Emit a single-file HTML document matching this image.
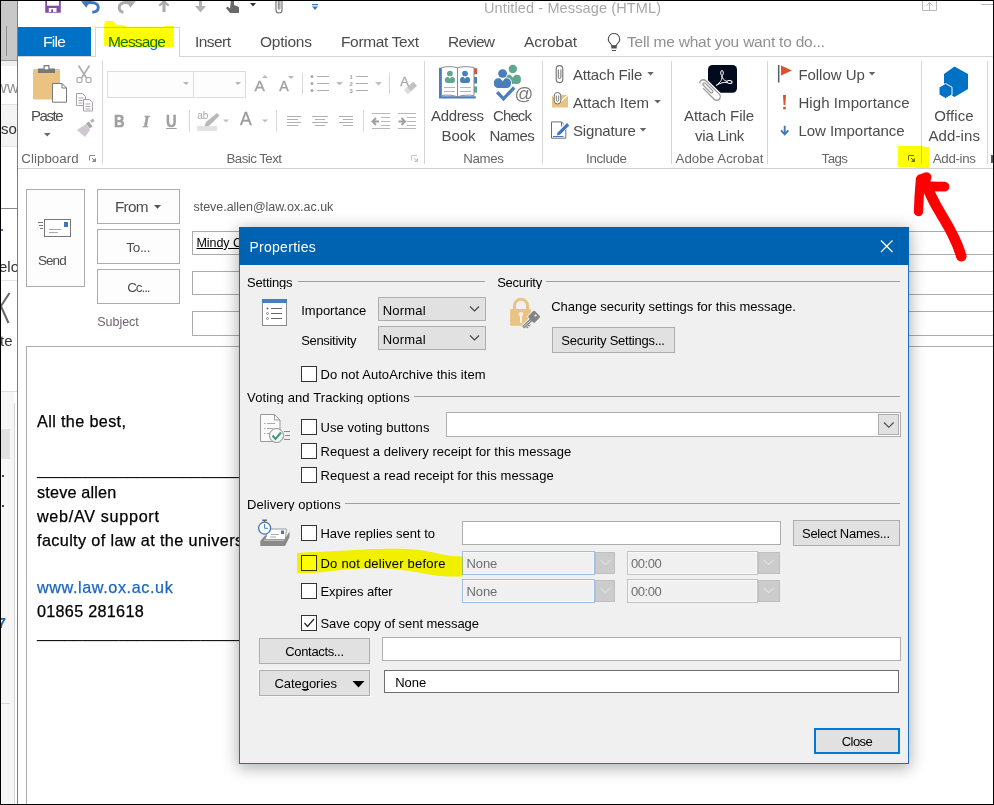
<!DOCTYPE html>
<html lang="en"><head><meta charset="utf-8"><title>Properties</title>
<style>
html,body{margin:0;padding:0;}
body{width:994px;height:805px;overflow:hidden;background:#fff;position:relative;font-family:"Liberation Sans", sans-serif;}
#root{position:absolute;left:0;top:0;width:994px;height:805px;overflow:hidden;background:#fff;}
#root div,#root svg{position:absolute;box-sizing:border-box;}
.t{position:absolute;white-space:pre;line-height:1;}
</style></head><body><div id="root">
<div style="left:0px;top:0px;width:17px;height:61px;background:#c8c8c8;"></div>
<div style="left:6px;top:26px;width:1px;height:30px;background:#8f8f8f;"></div>
<div style="left:0px;top:60px;width:17px;height:1px;background:#9a9a9a;"></div>
<div style="left:0px;top:61px;width:17px;height:5px;background:#f0f0f0;"></div>
<div style="left:0px;top:66px;width:17px;height:38px;background:#ffffff;"></div>
<div style="left:0px;top:104px;width:17px;height:1px;background:#e2e2e2;"></div>
<div style="left:0px;top:105px;width:17px;height:41px;background:#f4f4f4;"></div>
<div style="left:0px;top:146px;width:17px;height:1px;background:#e2e2e2;"></div>
<div style="left:0px;top:147px;width:17px;height:62px;background:#ffffff;"></div>
<div style="left:0px;top:208px;width:17px;height:1px;background:#8a8a8a;"></div>
<div style="left:0px;top:210px;width:17px;height:595px;background:#ffffff;"></div>
<div style="left:0px;top:391px;width:17px;height:1px;background:#dcdcdc;"></div>
<div style="left:0px;top:392px;width:14px;height:413px;background:#f6f6f6;"></div>
<div style="left:0px;top:429px;width:10px;height:30px;background:#e1e1e1;"></div>
<div style="left:14px;top:403px;width:1px;height:402px;background:#d6d6d6;"></div>
<div style="left:0px;top:703px;width:10px;height:1px;background:#d6d6d6;"></div>
<div style="left:2px;top:475px;width:2px;height:2px;background:#444;"></div>
<div style="left:2px;top:505px;width:2px;height:2px;background:#444;"></div>
<svg style="left:0;top:292px" width="17" height="38" viewBox="0 0 17 38"><path d="M9.500 1L0 15.500M0 12L8.500 31" stroke="#666" stroke-width="2" fill="none"/></svg>
<div style="left:1px;top:229px;width:2px;height:2px;background:#3b78c3;"></div>
<div style="left:0px;top:280px;width:17px;height:1px;background:#e4e4e4;"></div>
<span class="t" style="left:-5px;top:79px;font-size:16.5px;color:#8e8e8e;">ww</span>
<span class="t" style="left:1px;top:121px;font-size:15px;color:#333;">so</span>
<span class="t" style="left:-1px;top:259px;font-size:15px;color:#333;">elo</span>
<span class="t" style="left:0px;top:333px;font-size:15px;color:#333;">te</span>
<span class="t" style="left:-2.5px;top:615px;font-size:15.5px;color:#1e5fb4;font-weight:bold;">7</span>
<div style="left:18px;top:0px;width:976px;height:805px;background:#fff;"></div>
<div style="left:17px;top:0px;width:1px;height:805px;background:#7d7d7d;"></div>
<div style="left:18px;top:27px;width:73px;height:30px;background:#0072c6;"></div>
<div style="left:18px;top:56px;width:77px;height:1px;background:#d4d4d4;"></div>
<div style="left:179px;top:56px;width:815px;height:1px;background:#d4d4d4;"></div>
<div style="left:95px;top:27px;width:85px;height:30px;border:1px solid #d4d4d4;border-bottom:none;"></div>
<div style="left:18px;top:168px;width:976px;height:1px;background:#d2d2d2;"></div>
<div style="left:102px;top:61px;width:1px;height:103px;background:#d6d6d6;"></div>
<div style="left:424px;top:61px;width:1px;height:103px;background:#d6d6d6;"></div>
<div style="left:542px;top:61px;width:1px;height:103px;background:#d6d6d6;"></div>
<div style="left:671px;top:61px;width:1px;height:103px;background:#d6d6d6;"></div>
<div style="left:767px;top:61px;width:1px;height:103px;background:#d6d6d6;"></div>
<div style="left:921px;top:61px;width:1px;height:103px;background:#d6d6d6;"></div>
<div style="left:987px;top:61px;width:1px;height:103px;background:#d6d6d6;"></div>
<div style="left:991px;top:155px;width:2px;height:8px;background:#555;"></div>
<svg style="left:40px;top:0" width="290" height="16" viewBox="40 0 290 16">
<path d="M45.200 0h15.600v12.800h-15.600z" fill="#854fa8"/><path d="M47 0h12v5.700h-12z" fill="#fff"/><path d="M48.800 8h7.700v4h-7.700z" fill="#fff"/><path d="M51.200 9.300h1.900v3h-1.900z" fill="#854fa8"/>
<path d="M85.500 3.800C91 1.200 98.300 2.800 98.300 7.500C98.300 10.500 95.500 12 92.300 12.200" fill="none" stroke="#3f78bf" stroke-width="2.900"/><path d="M81 1.200L90 1L86.300 7.800Z" fill="#3f78bf"/>
<path d="M131 3.800C125.500 1.200 119.200 2.800 119.200 7.500C119.200 10 121 12 123.500 12.300" fill="none" stroke="#ababab" stroke-width="2.900"/><path d="M135.800 1.200L126.500 1L130.300 7.800Z" fill="#ababab"/>
<path d="M162.5 0h3v12h-3z M158.5 5 L164 0 L169.5 5 L168 6.5 L164 3 L160 6.5Z" fill="#ababab"/>
<path d="M199 0h3v8h-3z M195 6 L206 6 L200.5 12.5Z" fill="#b4b4b4"/>
<path d="M231 0h3v5l5 2v6h-9l-4-5 1.5-1.5 2.5 2z" fill="#6a6a6a"/>
<path d="M250 3h6l-3 3.5z" fill="#333"/>
<path d="M276 0v10a3 3 0 0 0 6 0V0" fill="none" stroke="#777" stroke-width="1.2"/><path d="M278.3 0v8.5a.8.8 0 0 0 1.6 0V0" fill="none" stroke="#777" stroke-width="1"/>
<path d="M312 4h6v1.2h-6z M312 6.5h6l-3 3.5z" fill="#3b78c3"/>
</svg>
<svg style="left:920px;top:0" width="74" height="14" viewBox="920 0 74 14"><path d="M922.5 0V10.5H936.5V0" fill="none" stroke="#b8b8b8" stroke-width="1"/><path d="M929.5 2.5V10 M926.5 5.5 L929.5 2.5 L932.5 5.5" fill="none" stroke="#b8b8b8" stroke-width="1"/><path d="M981 4.5H993" stroke="#b8b8b8" stroke-width="1"/></svg>
<svg style="left:604px;top:31px" width="20" height="24" viewBox="0 0 20 24"><path d="M10 2.500a5.600 5.600 0 0 1 3.600 9.900c-.9.800-1.100 1.600-1.200 2.400h-4.800c-.1-.8-.3-1.600-1.200-2.400A5.600 5.600 0 0 1 10 2.500z" fill="none" stroke="#505050" stroke-width="1.100"/><rect x="7.300" y="14.600" width="5.400" height="2.900" fill="#505050"/><path d="M8 19.500h4" stroke="#505050" stroke-width="1"/></svg>
<svg style="left:30px;top:62px" width="70" height="80" viewBox="30 62 70 80">
<rect x="33" y="69" width="27" height="30.5" rx="1.5" fill="#eac282"/>
<path d="M38 73v-4.5h5.5v-3.5h6v3.5H55V73z" fill="#787878"/><rect x="44.7" y="66.3" width="3.6" height="3" fill="#fff"/>
<path d="M52.5 83.5h9.5l4.5 4.5v14.2h-14z" fill="#fff" stroke="#787878" stroke-width="1"/><path d="M62 83.5v4.5h4.5" fill="none" stroke="#787878" stroke-width="1"/>
<path d="M44 133h6.5l-3.25 3.5z" fill="#666"/>
<!-- scissors -->
<path d="M78.5 65.5L86.5 78 M89.5 65.5L81.5 78" stroke="#b0b0b0" stroke-width="1.8" fill="none"/><circle cx="79.5" cy="80" r="2.6" fill="none" stroke="#b0b0b0" stroke-width="1.2"/><circle cx="88.500" cy="80" r="2.6" fill="none" stroke="#b0b0b0" stroke-width="1.2"/>
<!-- copy -->
<path d="M76.5 93.5h6l3 3v9h-9z" fill="#fff" stroke="#a89ea8" stroke-width="1"/><path d="M83.500 99.500h6l3 3v8.500h-9z" fill="#fff" stroke="#a89ea8" stroke-width="1"/>
<path d="M78.500 98h5M78.500 100.500h4M78.500 103h4 M85.500 104h5M85.500 106.500h5M85.500 109h5" stroke="#ada3ad" stroke-width="1"/>
<!-- painter -->
<path d="M77 130l9-6 4 6-5 7z" fill="#d0c8d0"/><path d="M86 123.500l3-2 3.500 5-3 2z" fill="#a8a8a8"/><path d="M90 120.500l3-2 1.800 2.500-3 2z" fill="#b8b8b8"/>
</svg>
<svg style="left:89px;top:155px" width="8" height="8" viewBox="0 0 8 8"><path d="M.5 5.500V.5H6" fill="none" stroke="#8a8a8a" stroke-width="1"/><path d="M7 2.800V7H2.800Z" fill="#8a8a8a"/><path d="M3 3l3 3" stroke="#8a8a8a" stroke-width="1"/></svg>
<div style="left:107px;top:71px;width:87px;height:27px;background:#fdfdfd;border:1px solid #dcdcdc;"></div>
<div style="left:193px;top:71px;width:53px;height:27px;background:#fdfdfd;border:1px solid #dcdcdc;"></div>
<svg style="left:100px;top:60px" width="330" height="80" viewBox="100 60 330 80"><path d="M183 82h6l-3 3z M235 82h6l-3 3z" fill="#b8b8b8"/><path d="M262 78l3-3 3 3z M288 76h6l-3 3z" fill="#b8b8b8"/><path d="M302.500 73v21 M389.500 73v21 M189.500 110v22 M276.500 110v22 M363.500 110v22" stroke="#d8d8d8" stroke-width="1"/><circle cx="312" cy="76.500" r="1.500" fill="#aaa"/><circle cx="312" cy="83.500" r="1.500" fill="#aaa"/><circle cx="312" cy="90.500" r="1.500" fill="#aaa"/><path d="M317 76.500h12M317 83.500h12M317 90.500h12 M356 76.500h12M356 83.500h12M356 90.500h12" stroke="#b0b0b0" stroke-width="1"/><path d="M336 82h7l-3.500 3.500z M375 82h7l-3.500 3.500z" fill="#c0c0c0"/><g transform="translate(410.600 87.800) rotate(-42)"><rect x="-6.200" y="-2.800" width="12.400" height="5.600" rx="1" fill="#c2c2c2"/><rect x="-6.200" y="-2.800" width="4" height="5.600" rx="1" fill="#dedede"/></g><path d="M204 127l2-5 11-9 2.500 2.500-10 10z" fill="#b8b8b8"/><rect x="197" y="126" width="20" height="5" fill="#e6dfe6"/><path d="M223 119.500h6l-3 3z M262 119.500h6l-3 3z" fill="#c0c0c0"/><path d="M287 116.500h14M287 119.500h11M287 122.500h14M287 125.500h11 M312 116.500h16M315 119.500h10M312 122.500h16M315 125.500h10 M339 116.500h14M343 119.500h10M339 122.500h14M343 125.500h10" stroke="#b0b0b0" stroke-width="1"/><path d="M372 113.500h18M381 117.500h9M381 121.500h9M381 125.500h9M372 128.500h18 M398 113.500h18M407 117.500h9M407 121.500h9M407 125.500h9M398 128.500h18" stroke="#b8b8b8" stroke-width="1"/><path d="M379 121.500h-6.500M376 118l-3.500 3.500 3.500 3.500 M398.500 121.500h6.500M401.500 118l3.500 3.500-3.500 3.500" stroke="#a0a0a0" stroke-width="2" fill="none"/></svg>
<svg style="left:411px;top:155px" width="8" height="8" viewBox="0 0 8 8"><path d="M.5 5.500V.5H6" fill="none" stroke="#c8c8c8" stroke-width="1"/><path d="M7 2.800V7H2.800Z" fill="#c8c8c8"/><path d="M3 3l3 3" stroke="#c8c8c8" stroke-width="1"/></svg>
<svg style="left:436px;top:62px" width="102" height="44" viewBox="436 62 102 44">
<rect x="474" y="68.200" width="3" height="6" fill="#d9532c"/><rect x="474" y="77" width="3" height="6.500" fill="#4a7ebb"/><rect x="474" y="86.400" width="3" height="6.300" fill="#5fa88f"/>
<path d="M439 67.800h2.500v28.400H475.700v2.300H439z" fill="#4a7ebb"/>
<path d="M441.500 67.500 C447 66.300 453 66.300 457.500 67.800 C462 66.300 468 66.300 474 67.500 V95.500 C468 94.800 462 95 457.500 96.800 C453 95 447 94.800 441.500 95.500Z" fill="#fff" stroke="#8a8a8a" stroke-width="1"/>
<path d="M457.500 67.800v29" stroke="#8a8a8a" stroke-width="1"/>
<circle cx="449.900" cy="73.600" r="2.900" fill="#5fa88f"/><rect x="445" y="77" width="9.900" height="5.900" rx="2.500" fill="#5fa88f"/><path d="M448 76.500l1.900 2.300 1.900-2.300z" fill="#fff"/>
<circle cx="465" cy="73.600" r="2.900" fill="#4a7ebb"/><rect x="460.100" y="77" width="9.900" height="5.900" rx="2.500" fill="#4a7ebb"/><path d="M463.100 76.500l1.900 2.300 1.900-2.300z" fill="#fff"/>
<path d="M444 87.500h11M444 91.500h11 M460 87.500h11M460 91.500h11" stroke="#b4b4b4" stroke-width="1"/>
<!-- check names -->
<circle cx="512.800" cy="69" r="4.200" fill="#5fa88f"/><rect x="505" y="74.800" width="15.900" height="9.200" rx="4" fill="#5fa88f"/><path d="M510 74.300l2.800 3.200 2.800-3.200z" fill="#fff"/>
<circle cx="502.600" cy="73.600" r="5.200" fill="#fff"/><rect x="493.100" y="77.500" width="18.700" height="11.300" rx="5" fill="#fff"/>
<circle cx="502.600" cy="73.600" r="4.400" fill="#4a7ebb"/><rect x="493.900" y="78.300" width="17.100" height="9.700" rx="4.300" fill="#4a7ebb"/><path d="M499.600 77.800l3 3.500 3-3.500z" fill="#fff"/>
<path d="M495.500 90l8 8.500 12.500-13" fill="none" stroke="#fff" stroke-width="5.500"/>
<path d="M497.200 92.200l6.300 6.600 10.700-11.300" fill="none" stroke="#4a7ebb" stroke-width="3.300"/>
</svg>
<svg style="left:548px;top:62px" width="120" height="80" viewBox="548 62 120 80">
<rect x="556.200" y="65.600" width="6.600" height="17" rx="3.300" fill="none" stroke="#6e6e6e" stroke-width="1.100"/>
<path d="M558.300 69.500V77.200a1.300 1.300 0 0 0 2.600 0V69.500" fill="none" stroke="#6e6e6e" stroke-width="1"/>
<path d="M552 94.800h16v12.700h-16z" fill="#eac282"/><path d="M552 95l8 7 8-7" fill="none" stroke="#fff" stroke-width="1.100"/>
<rect x="554.200" y="92.500" width="6.600" height="11.500" rx="3.300" fill="#fff" stroke="#6e6e6e" stroke-width="1"/>
<path d="M556.300 95.500V100a1.200 1.200 0 0 0 2.400 0V95.500" fill="none" stroke="#6e6e6e" stroke-width=".9"/>
<path d="M551.500 121.900h10l4.300 4.300v12h-14.300z" fill="#fff" stroke="#6e6e6e" stroke-width="1"/><path d="M561.500 121.900v4.300h4.300" fill="none" stroke="#6e6e6e" stroke-width="1"/>
<path d="M558.300 133.500l9.200-9.200" stroke="#fff" stroke-width="5"/>
<path d="M556.700 135.600l1-3.200 9.300-9.300 2.300 2.300-9.300 9.300z" fill="#3f78bf"/>
<path d="M553 136.500h10.500" stroke="#3f78bf" stroke-width="1"/>
<path d="M647.300 72h6.500l-3.250 3.500z M654.300 100h6.500l-3.250 3.500z M639.800 128h6.500l-3.250 3.500z" fill="#666"/>
</svg>
<svg style="left:696px;top:62px" width="46" height="44" viewBox="696 62 46 44">
<rect x="708" y="65" width="29" height="27.700" rx="4.500" fill="#020a1e"/>
<g fill="none" stroke="#fff" stroke-width="1">
<ellipse cx="722" cy="73" rx="1.300" ry="2.500"/>
<path d="M722 75.500C722.500 79 721 82 716 85.500"/>
<path d="M721.700 76C722.500 78.500 724 80.500 727 81.500"/>
<path d="M716.500 85.300C720 82.800 724 82.200 727 82.500"/>
<ellipse cx="729.500" cy="82" rx="2.600" ry="1.400" transform="rotate(8 729.500 82)"/>
</g>
<g transform="translate(710 90) rotate(-45)">
<rect x="-3.600" y="-13" width="7.200" height="26" rx="3.600" fill="#fff" stroke="#fff" stroke-width="3.600"/>
<rect x="-3.600" y="-13" width="7.200" height="26" rx="3.600" fill="#fff" stroke="#9a9a9a" stroke-width="1.300"/>
<path d="M-3.600 -6V-14" stroke="#fff" stroke-width="2"/>
<rect x="-1.400" y="-9.500" width="2.800" height="13" rx="1.400" fill="none" stroke="#9a9a9a" stroke-width="1.200"/>
</g>
</svg>
<svg style="left:776px;top:62px" width="20" height="80" viewBox="776 62 20 80">
<path d="M778.700 65v17.500" stroke="#5a5a5a" stroke-width="1.500"/><path d="M781 65.500l11 5-11 5z" fill="#d9532c"/>
<path d="M783 95h3l-.6 10h-1.800z" fill="#d9532c"/><rect x="783.200" y="106.800" width="2.600" height="2.600" fill="#d9532c"/>
<path d="M784.700 125.800v8 M781 130.300l3.700 4 3.700-4" fill="none" stroke="#3f78bf" stroke-width="1.900"/>
<path d="M868.800 72h6.500l-3.250 3.500z" fill="#666"/>
</svg>
<svg style="left:866px;top:70px" width="12" height="8" viewBox="866 70 12 8"><path d="M868.800 72h6.500l-3.250 3.500z" fill="#666"/></svg>
<svg style="left:908px;top:155px" width="8" height="8" viewBox="0 0 8 8"><path d="M.5 5.500V.5H6" fill="none" stroke="#6e6e6e" stroke-width="1"/><path d="M7 2.800V7H2.800Z" fill="#6e6e6e"/><path d="M3 3l3 3" stroke="#6e6e6e" stroke-width="1"/></svg>
<svg style="left:935px;top:64px" width="36" height="36" viewBox="935 64 36 36">
<path d="M954.500 66.500l13.500 7.500v15l-13.500 8-4-2.500v-6l-6.500-4v-10.500z" fill="#0072c6"/>
<path d="M945.500 83.500l6.500 3.700v7.600l-6.500 3.700-6.500-3.700v-7.600z" fill="#0072c6" stroke="#fff" stroke-width="1"/>
</svg>
<div style="left:26px;top:189px;width:59px;height:98px;background:#fdfdfd;border:1px solid #ababab;"></div>
<div style="left:97px;top:189px;width:83px;height:35px;background:#fdfdfd;border:1px solid #ababab;"></div>
<div style="left:97px;top:229px;width:83px;height:35px;background:#fdfdfd;border:1px solid #ababab;"></div>
<div style="left:97px;top:269px;width:83px;height:35px;background:#fdfdfd;border:1px solid #ababab;"></div>
<div style="left:192px;top:231px;width:810px;height:24px;background:#fff;border:1px solid #ababab;"></div>
<div style="left:192px;top:271px;width:810px;height:24px;background:#fff;border:1px solid #ababab;"></div>
<div style="left:192px;top:311px;width:810px;height:25px;background:#fff;border:1px solid #ababab;"></div>
<svg style="left:36px;top:216px" width="38" height="24" viewBox="36 216 38 24">
<rect x="44.500" y="219.500" width="26" height="17" fill="#fff" stroke="#777" stroke-width="1"/>
<rect x="64" y="222" width="4" height="5" fill="#3b78c3"/>
<path d="M49 229.500h12M49 232.500h9" stroke="#aaa" stroke-width="1"/>
<path d="M38 222.500h5M39 225.500h4M40 228.500h3" stroke="#777" stroke-width="1"/>
</svg>
<svg style="left:152px;top:203px" width="12" height="8" viewBox="0 0 12 8"><path d="M2 2h7l-3.500 3.800z" fill="#555"/></svg>
<div style="left:26px;top:346px;width:980px;height:470px;background:#fff;border:1px solid #ababab;"></div>
<span class="t" style="left:484px;top:1px;font-size:14.5px;color:#a8a8a8;letter-spacing:0.123px;">Untitled - Message (HTML)</span>
<span class="t" style="left:43px;top:34px;font-size:15.5px;color:#fff;letter-spacing:-0.661px;">File</span>
<span class="t" style="left:108px;top:34px;font-size:15.5px;color:#1a70d0;letter-spacing:-0.818px;">Message</span>
<span class="t" style="left:195px;top:34px;font-size:15.5px;color:#4c4c4c;letter-spacing:-0.553px;">Insert</span>
<span class="t" style="left:260px;top:34px;font-size:15.5px;color:#4c4c4c;letter-spacing:-0.237px;">Options</span>
<span class="t" style="left:341px;top:34px;font-size:15.5px;color:#4c4c4c;letter-spacing:-0.355px;">Format Text</span>
<span class="t" style="left:448px;top:34px;font-size:15.5px;color:#4c4c4c;letter-spacing:-0.766px;">Review</span>
<span class="t" style="left:524px;top:34px;font-size:15.5px;color:#4c4c4c;letter-spacing:-0.070px;">Acrobat</span>
<span class="t" style="left:627px;top:34px;font-size:15.5px;color:#909090;letter-spacing:-0.213px;">Tell me what you want to do...</span>
<span class="t" style="left:31px;top:108px;font-size:15px;color:#4c4c4c;letter-spacing:-1.465px;">Paste</span>
<span class="t" style="left:21.3px;top:152px;font-size:13.3px;color:#666;letter-spacing:0.047px;">Clipboard</span>
<span class="t" style="left:114.4px;top:113px;font-size:17px;color:#a0a0a0;font-weight:bold;transform:scaleX(.86);transform-origin:left;-webkit-text-stroke:.6px;">B</span>
<span class="t" style="left:142.8px;top:113px;font-size:17.6px;color:#a0a0a0;font-weight:bold;font-style:italic;font-family:'Liberation Serif', serif;-webkit-text-stroke:.3px;">I</span>
<span class="t" style="left:165.8px;top:114px;font-size:16px;color:#a0a0a0;font-weight:bold;text-decoration:underline;transform:scaleX(.92);transform-origin:left;-webkit-text-stroke:.4px;">U</span>
<span class="t" style="left:197.3px;top:111px;font-size:10px;color:#a8a8a8;">ab</span>
<span class="t" style="left:240px;top:111px;font-size:17.5px;color:#9c9c9c;-webkit-text-stroke:.35px;">A</span>
<span class="t" style="left:254.5px;top:78px;font-size:15.5px;color:#a0a0a0;-webkit-text-stroke:.35px;">A</span>
<span class="t" style="left:279.3px;top:79px;font-size:14.2px;color:#a0a0a0;-webkit-text-stroke:.35px;">A</span>
<span class="t" style="left:349.6px;top:74px;font-size:6px;color:#a0a0a0;font-weight:bold;">1</span>
<span class="t" style="left:349.6px;top:81px;font-size:6px;color:#a0a0a0;font-weight:bold;">2</span>
<span class="t" style="left:349.6px;top:88px;font-size:6px;color:#a0a0a0;font-weight:bold;">3</span>
<span class="t" style="left:400.3px;top:75px;font-size:13px;color:#a8a8a8;-webkit-text-stroke:.3px;">A</span>
<span class="t" style="left:226.5px;top:152px;font-size:13.3px;color:#666;letter-spacing:-0.540px;">Basic Text</span>
<span class="t" style="left:514.5px;top:85px;font-size:18.5px;color:#7a7a7a;">@</span>
<span class="t" style="left:431px;top:108px;font-size:15px;color:#4c4c4c;letter-spacing:-0.339px;">Address</span>
<span class="t" style="left:441.5px;top:128px;font-size:15px;color:#4c4c4c;letter-spacing:-0.068px;">Book</span>
<span class="t" style="left:493px;top:108px;font-size:15px;color:#4c4c4c;letter-spacing:-0.883px;">Check</span>
<span class="t" style="left:489.5px;top:128px;font-size:15px;color:#4c4c4c;letter-spacing:-0.554px;">Names</span>
<span class="t" style="left:463.3px;top:152px;font-size:13.3px;color:#666;letter-spacing:-0.356px;">Names</span>
<span class="t" style="left:573px;top:67px;font-size:15px;color:#4c4c4c;letter-spacing:-0.158px;">Attach File</span>
<span class="t" style="left:573px;top:95px;font-size:15px;color:#4c4c4c;letter-spacing:0.013px;">Attach Item</span>
<span class="t" style="left:573px;top:123px;font-size:15px;color:#4c4c4c;letter-spacing:-0.177px;">Signature</span>
<span class="t" style="left:586px;top:152px;font-size:13.3px;color:#666;letter-spacing:-0.315px;">Include</span>
<span class="t" style="left:684px;top:108px;font-size:15px;color:#4c4c4c;letter-spacing:-0.087px;">Attach File</span>
<span class="t" style="left:695px;top:128px;font-size:15px;color:#4c4c4c;letter-spacing:-0.223px;">via Link</span>
<span class="t" style="left:675.5px;top:152px;font-size:13.3px;color:#666;letter-spacing:0.054px;">Adobe Acrobat</span>
<span class="t" style="left:798.4px;top:67px;font-size:15px;color:#4c4c4c;letter-spacing:-0.036px;">Follow Up</span>
<span class="t" style="left:798.4px;top:95px;font-size:15px;color:#4c4c4c;letter-spacing:0.088px;">High Importance</span>
<span class="t" style="left:798.4px;top:123px;font-size:15px;color:#4c4c4c;letter-spacing:-0.033px;">Low Importance</span>
<span class="t" style="left:821.6px;top:152px;font-size:13.3px;color:#666;letter-spacing:-0.565px;">Tags</span>
<span class="t" style="left:934.2px;top:108px;font-size:15px;color:#4c4c4c;letter-spacing:0.119px;">Office</span>
<span class="t" style="left:928.4px;top:128px;font-size:15px;color:#4c4c4c;letter-spacing:0.123px;">Add-ins</span>
<span class="t" style="left:932.8px;top:152px;font-size:13.3px;color:#666;letter-spacing:-0.316px;">Add-ins</span>
<span class="t" style="left:37.9px;top:254px;font-size:13.5px;color:#4c4c4c;letter-spacing:-0.910px;">Send</span>
<span class="t" style="left:115px;top:199px;font-size:15.3px;color:#4c4c4c;letter-spacing:-0.734px;">From</span>
<span class="t" style="left:126.2px;top:241px;font-size:13.5px;color:#4c4c4c;letter-spacing:-0.279px;">To...</span>
<span class="t" style="left:127.2px;top:281px;font-size:13.5px;color:#4c4c4c;letter-spacing:-1.091px;">Cc...</span>
<span class="t" style="left:97.2px;top:316px;font-size:12.5px;color:#6f636f;letter-spacing:-0.017px;">Subject</span>
<span class="t" style="left:193.5px;top:201px;font-size:12.5px;color:#555;letter-spacing:-0.032px;">steve.allen@law.ox.ac.uk</span>
<span class="t" style="left:196.5px;top:237px;font-size:12.5px;color:#000;letter-spacing:-0.057px;text-decoration:underline;">Mindy C</span>
<span class="t" style="left:37px;top:413px;font-size:16.2px;color:#000;letter-spacing:0.367px;-webkit-text-stroke:0.25px;">All the best,</span>
<span class="t" style="left:37px;top:461px;font-size:16.2px;color:#000;letter-spacing:0.074px;">________________________________________</span>
<span class="t" style="left:37px;top:484px;font-size:16.2px;color:#000;letter-spacing:0.191px;-webkit-text-stroke:0.25px;">steve allen</span>
<span class="t" style="left:37px;top:508px;font-size:16.2px;color:#000;letter-spacing:0.679px;-webkit-text-stroke:0.25px;">web/AV support</span>
<span class="t" style="left:37px;top:532px;font-size:16.2px;color:#000;letter-spacing:0.384px;-webkit-text-stroke:0.25px;">faculty of law at the univers</span>
<span class="t" style="left:37px;top:579px;font-size:16.2px;color:#1c66c0;letter-spacing:0.596px;-webkit-text-stroke:0.25px;">www.law.ox.ac.uk</span>
<span class="t" style="left:37px;top:603px;font-size:16.2px;color:#000;letter-spacing:0.288px;-webkit-text-stroke:0.25px;">01865 281618</span>
<span class="t" style="left:37px;top:624px;font-size:16.2px;color:#000;letter-spacing:0.074px;">________________________________________</span>
<svg style="left:100px;top:16px;mix-blend-mode:multiply" width="80" height="36" viewBox="100 16 80 36"><path d="M105.200 21 L113 21 L116.200 24.400 L124.200 25.400 L127.200 26.800 L164 26.800 L165 26 L174 26 L174 46.500 L171.500 47.600 L119.200 47.600 L118 46 L104.100 46 L104.100 25 Z" fill="#ffff00"/></svg>
<div style="left:898px;top:146px;width:25px;height:21px;background:#ffff00;mix-blend-mode:multiply;"></div>
<div style="left:915px;top:147px;width:14px;height:21px;background:#ffff00;mix-blend-mode:multiply;"></div>
<div style="left:239px;top:227px;width:670px;height:537px;background:#f0f0f0;border:1px solid #1a6fc0;box-shadow:0 3px 15px 1px rgba(0,0,0,.32);"></div>
<div style="left:239px;top:227px;width:670px;height:38px;background:#0063b1;"></div>
<svg style="left:879px;top:239px" width="16" height="16" viewBox="0 0 16 16"><path d="M2 1.500l11.500 11.500M13.500 1.500L2 13" stroke="#fff" stroke-width="1.200"/></svg>
<div style="left:298px;top:281px;width:187px;height:1px;background:#a0a0a0;"></div>
<div style="left:546px;top:281px;width:354px;height:1px;background:#a0a0a0;"></div>
<div style="left:414px;top:396px;width:486px;height:1px;background:#a0a0a0;"></div>
<div style="left:345px;top:503px;width:555px;height:1px;background:#a0a0a0;"></div>
<svg style="left:260px;top:297px" width="30" height="32" viewBox="260 297 30 32">
<rect x="262.500" y="299.500" width="24" height="26" fill="#fff" stroke="#8a8a8a" stroke-width="1"/><rect x="262" y="299" width="25" height="4" fill="#4a7ebb"/>
<circle cx="267.500" cy="308.500" r="1" fill="#666"/><circle cx="267.500" cy="313.500" r="1" fill="none" stroke="#666" stroke-width=".7"/><circle cx="267.500" cy="318.500" r="1" fill="none" stroke="#666" stroke-width=".7"/>
<path d="M271 308.500h11M271 313.500h11M271 318.500h11" stroke="#666" stroke-width="1"/></svg>
<div style="left:378px;top:297px;width:108px;height:24px;background:#e1e1e1;border:1px solid #adadad;"></div>
<svg style="left:469px;top:305.0px" width="12" height="8" viewBox="0 0 12 8"><path d="M1 1.500l4.500 4.500 4.500-4.500" fill="none" stroke="#444" stroke-width="1.100"/></svg>
<div style="left:378px;top:326px;width:108px;height:24px;background:#e1e1e1;border:1px solid #adadad;"></div>
<svg style="left:469px;top:334.0px" width="12" height="8" viewBox="0 0 12 8"><path d="M1 1.500l4.500 4.500 4.500-4.500" fill="none" stroke="#444" stroke-width="1.100"/></svg>
<div style="left:301px;top:366px;width:16px;height:16px;background:#fff;border:1px solid #333;"></div>
<svg style="left:506px;top:295px" width="38" height="38" viewBox="506 295 38 38">
<path d="M514.500 310v-4.200a6.500 6.500 0 0 1 13 0v4.200" fill="none" stroke="#eac282" stroke-width="3"/>
<rect x="510.100" y="309" width="20.900" height="16.800" rx="1.300" fill="#eac282"/>
<circle cx="521" cy="314.300" r="2.300" fill="#f0f0f0"/><rect x="520" y="315" width="2" height="8" fill="#f0f0f0"/>
<g stroke="#f0f0f0" stroke-width="2" fill="#f0f0f0"><rect x="-4.600" y="-4.600" width="9.200" height="9.200" rx="1.500" transform="translate(534.100 316.800) rotate(45)"/><path d="M531.500 319.500l-8.300 7.800" stroke-width="5.200"/></g>
<rect x="-4.600" y="-4.600" width="9.200" height="9.200" rx="1.500" transform="translate(534.100 316.800) rotate(45)" fill="#848484"/>
<path d="M531.500 319.500l-8.300 7.800" stroke="#848484" stroke-width="3.200"/><path d="M530.500 320.400l-6.800 6.400" stroke="#f0f0f0" stroke-width=".8"/>
<path d="M526.500 326.500l1.500 1.500M528.300 325l1.300 1.300" stroke="#848484" stroke-width="1.400"/>
<circle cx="535.600" cy="315.500" r="1.100" fill="#fff"/>
</svg>
<div style="left:552px;top:327px;width:123px;height:26px;background:#e1e1e1;border:1px solid #adadad;"></div>
<svg style="left:258px;top:412px" width="36" height="34" viewBox="258 412 36 34">
<path d="M260.500 414.500h14l5.500 5.500v21.500h-19.500z" fill="#fafafa" stroke="#9a9a9a" stroke-width="1"/><path d="M274.500 414.500v5.500h5.500" fill="none" stroke="#9a9a9a" stroke-width="1"/>
<path d="M264 423.500h1.500M267 423.500h8 M264 428.500h1.500M267 428.500h6 M264 433.500h1.500M267 433.500h4" stroke="#aaa" stroke-width="1"/>
<circle cx="276.500" cy="435.500" r="7" fill="#f6f6f6" stroke="#8a8a8a" stroke-width="1"/><path d="M272.500 435.500l3 3.500 5.500-6.500" fill="none" stroke="#3f9a72" stroke-width="2"/>
<path d="M284 431.500h6M285 435.500h5M284 439.500h6" stroke="#8a8a8a" stroke-width="1"/></svg>
<div style="left:301px;top:419px;width:16px;height:16px;background:#fff;border:1px solid #333;"></div>
<div style="left:446px;top:412px;width:455px;height:25px;background:#fff;border:1px solid #adadad;"></div>
<div style="left:878px;top:414px;width:21px;height:21px;background:#e1e1e1;border:1px solid #adadad;"></div>
<svg style="left:882px;top:420px" width="14" height="10" viewBox="0 0 14 10"><path d="M2 2.500l4.800 4.800 4.800-4.800" fill="none" stroke="#444" stroke-width="1.100"/></svg>
<div style="left:301px;top:443px;width:16px;height:16px;background:#fff;border:1px solid #333;"></div>
<div style="left:301px;top:467px;width:16px;height:16px;background:#fff;border:1px solid #333;"></div>
<svg style="left:256px;top:516px" width="38" height="34" viewBox="256 516 38 34">
<path d="M267.700 529h18.700l-1 10.500h-20.400z" fill="#fff" stroke="#9a9a9a" stroke-width="1"/>
<rect x="281" y="530.500" width="3" height="3.500" fill="#3f78bf"/><path d="M271 534.500h8M270 537h6" stroke="#aaa" stroke-width="1"/>
<path d="M260.300 546v-5l4.700-5.500h2.300l-3.300 5h20l5.500-9v5.500l-4.500 9z" fill="#8a8a8a"/>
<circle cx="264.600" cy="528.100" r="6" fill="#fff" stroke="#3f78bf" stroke-width="1.300"/><path d="M264.600 524v4.300h3.400" fill="none" stroke="#3f78bf" stroke-width="1"/><path d="M262.300 519.500h4.600v1.500h-1.500v1.200h-1.600v-1.200h-1.500z" fill="#666"/>
</svg>
<div style="left:301px;top:525px;width:16px;height:16px;background:#fff;border:1px solid #333;"></div>
<div style="left:462px;top:521px;width:319px;height:24px;background:#fff;border:1px solid #adadad;"></div>
<div style="left:793px;top:520px;width:107px;height:26px;background:#e1e1e1;border:1px solid #adadad;"></div>
<div style="left:301px;top:555px;width:16px;height:16px;background:#fff;border:1px solid #333;"></div>
<div style="left:301px;top:583px;width:16px;height:16px;background:#fff;border:1px solid #333;"></div>
<div style="left:462px;top:551px;width:133px;height:24px;background:#f0f0f0;border:1px solid #9dbde3;box-shadow:inset 0 0 0 1px #f8f8f8;"></div>
<div style="left:595px;top:552px;width:20px;height:22px;background:#cccccc;border:1px solid #bfbfbf;"></div>
<svg style="left:599px;top:558.0px" width="13" height="9" viewBox="0 0 13 9"><path d="M1.500 2l5 4.500 5-4.500" fill="none" stroke="#e0e0e0" stroke-width="1.100"/></svg>
<div style="left:627px;top:551px;width:131px;height:24px;background:#f0f0f0;border:1px solid #c3c3c3;box-shadow:inset 0 0 0 1px #f8f8f8;"></div>
<div style="left:758px;top:552px;width:22px;height:22px;background:#cccccc;border:1px solid #bfbfbf;"></div>
<svg style="left:762px;top:558.0px" width="13" height="9" viewBox="0 0 13 9"><path d="M1.500 2l5 4.500 5-4.500" fill="none" stroke="#e0e0e0" stroke-width="1.100"/></svg>
<div style="left:462px;top:579px;width:133px;height:24px;background:#f0f0f0;border:1px solid #9dbde3;box-shadow:inset 0 0 0 1px #f8f8f8;"></div>
<div style="left:595px;top:580px;width:20px;height:22px;background:#cccccc;border:1px solid #bfbfbf;"></div>
<svg style="left:599px;top:586.0px" width="13" height="9" viewBox="0 0 13 9"><path d="M1.500 2l5 4.500 5-4.500" fill="none" stroke="#e0e0e0" stroke-width="1.100"/></svg>
<div style="left:627px;top:579px;width:131px;height:24px;background:#f0f0f0;border:1px solid #c3c3c3;box-shadow:inset 0 0 0 1px #f8f8f8;"></div>
<div style="left:758px;top:580px;width:22px;height:22px;background:#cccccc;border:1px solid #bfbfbf;"></div>
<svg style="left:762px;top:586.0px" width="13" height="9" viewBox="0 0 13 9"><path d="M1.500 2l5 4.500 5-4.500" fill="none" stroke="#e0e0e0" stroke-width="1.100"/></svg>
<div style="left:301px;top:615px;width:16px;height:16px;background:#fff;border:1px solid #333;"></div>
<svg style="left:301px;top:615px" width="16" height="16" viewBox="0 0 16 16"><path d="M3.500 8l3 3.500 6.500-7.500" fill="none" stroke="#222" stroke-width="1.200"/></svg>
<div style="left:259px;top:638px;width:111px;height:26px;background:#e1e1e1;border:1px solid #adadad;"></div>
<div style="left:382px;top:637px;width:519px;height:24px;background:#fff;border:1px solid #adadad;"></div>
<div style="left:258px;top:669px;width:113px;height:28px;background:#f8f8f8;"></div>
<div style="left:259px;top:670px;width:111px;height:26px;background:#e1e1e1;border:1px solid #adadad;"></div>
<svg style="left:350px;top:679px" width="18" height="10" viewBox="350 679 18 10"><path d="M352.500 681h12l-6 6.500z" fill="#000"/></svg>
<div style="left:384px;top:670px;width:515px;height:23px;background:#fff;border:1px solid #6e6e6e;"></div>
<div style="left:814px;top:728px;width:86px;height:26px;background:#e1e1e1;border:2px solid #0078d7;"></div>
<span class="t" style="left:249.4px;top:240px;font-size:14px;color:#fff;letter-spacing:0.288px;">Properties</span>
<span class="t" style="left:247.1px;top:276px;font-size:13px;color:#000;letter-spacing:-0.241px;overflow:hidden;">Settings</span>
<span class="t" style="left:497.2px;top:276px;font-size:13px;color:#000;letter-spacing:-0.281px;overflow:hidden;">Security</span>
<span class="t" style="left:247.1px;top:391px;font-size:13px;color:#000;letter-spacing:0.114px;overflow:hidden;">Voting and Tracking options</span>
<span class="t" style="left:247.1px;top:498px;font-size:13px;color:#000;letter-spacing:0.073px;overflow:hidden;">Delivery options</span>
<span class="t" style="left:301.2px;top:304px;font-size:13px;color:#000;letter-spacing:0.006px;">Importance</span>
<span class="t" style="left:301.2px;top:334px;font-size:13px;color:#000;letter-spacing:-0.323px;">Sensitivity</span>
<span class="t" style="left:382.7px;top:304px;font-size:13px;color:#000;letter-spacing:0.219px;">Normal</span>
<span class="t" style="left:382.7px;top:333px;font-size:13px;color:#000;letter-spacing:0.219px;">Normal</span>
<span class="t" style="left:320.5px;top:368px;font-size:13px;color:#000;letter-spacing:0.066px;">Do not AutoArchive this item</span>
<span class="t" style="left:551.2px;top:300px;font-size:13px;color:#000;letter-spacing:-0.009px;">Change security settings for this message.</span>
<span class="t" style="left:561.3px;top:334px;font-size:13px;color:#000;letter-spacing:-0.247px;">Security Settings...</span>
<span class="t" style="left:320.5px;top:421px;font-size:13px;color:#000;letter-spacing:0.071px;">Use voting buttons</span>
<span class="t" style="left:320.5px;top:445px;font-size:13px;color:#000;letter-spacing:0.036px;">Request a delivery receipt for this message</span>
<span class="t" style="left:320.5px;top:469px;font-size:13px;color:#000;letter-spacing:0.071px;">Request a read receipt for this message</span>
<span class="t" style="left:320.5px;top:527px;font-size:13px;color:#000;letter-spacing:-0.021px;">Have replies sent to</span>
<span class="t" style="left:802px;top:527px;font-size:13px;color:#000;letter-spacing:-0.269px;">Select Names...</span>
<span class="t" style="left:320.5px;top:557px;font-size:13px;color:#000;letter-spacing:0.216px;">Do not deliver before</span>
<span class="t" style="left:320.5px;top:585px;font-size:13px;color:#000;letter-spacing:-0.065px;">Expires after</span>
<span class="t" style="left:466.4px;top:557.2px;font-size:13px;color:#6d6d6d;letter-spacing:-0.059px;">None</span>
<span class="t" style="left:631px;top:557.2px;font-size:13px;color:#6d6d6d;letter-spacing:-0.437px;">00:00</span>
<span class="t" style="left:466.4px;top:585.1px;font-size:13px;color:#6d6d6d;letter-spacing:-0.059px;">None</span>
<span class="t" style="left:631px;top:585.1px;font-size:13px;color:#6d6d6d;letter-spacing:-0.437px;">00:00</span>
<span class="t" style="left:320.5px;top:617px;font-size:13px;color:#000;letter-spacing:-0.050px;">Save copy of sent message</span>
<span class="t" style="left:285.3px;top:645px;font-size:13px;color:#000;letter-spacing:-0.344px;">Contacts...</span>
<span class="t" style="left:274.5px;top:677px;font-size:13px;color:#000;letter-spacing:-0.055px;text-decoration-skip-ink:none;">Cate<u>g</u>ories</span>
<span class="t" style="left:395.2px;top:676px;font-size:13px;color:#000;letter-spacing:-0.026px;">None</span>
<span class="t" style="left:841.8px;top:735px;font-size:13px;color:#000;letter-spacing:-0.587px;">Close</span>
<svg style="left:290px;top:544px;mix-blend-mode:multiply" width="180" height="38" viewBox="290 544 180 38"><path d="M297 553 C315 552 328 551.500 340 550.800 C360 549.500 385 548.500 400 548.800 C412 549 422 550 430 551.700 C438 553.500 445 555 450 555.800 C455 556.500 459 556.500 462.500 556.500 L462.500 576.500 C455 576.700 447 576.500 440 576 C432 575 426 574 420 572.800 C410 571 400 569.500 390 568.800 C380 568.200 370 568.200 360 568.500 C350 569 340 570 330 571.200 C318 572.500 307 573.500 297 573.500 Z" fill="#ffff00"/></svg>
<svg style="left:900px;top:165px" width="94" height="105" viewBox="900 165 94 105">
<g fill="none" stroke="#ff0000" stroke-linecap="round" stroke-linejoin="round">
<path d="M920.500 179 C919.500 190 918.800 200 918.500 211.600" stroke-width="9.300"/>
<path d="M924.500 177.800 L926.500 177.300" stroke-width="10"/>
<path d="M925 186.300 L944.500 186.700" stroke-width="9.800"/>
<path d="M925 181 C929 193 935.400 204.800 941 214 C944.500 220 948 225.500 952 233.500 C955 239.500 958.500 246 961.300 256.300" stroke-width="10.500"/>
</g></svg>
<div style="left:0px;top:0px;width:994px;height:1px;background:#000;"></div>
<div style="left:0px;top:0px;width:1px;height:805px;background:#000;"></div>
<div style="left:993px;top:0px;width:1px;height:805px;background:#000;"></div>
<div style="left:0px;top:804px;width:994px;height:1px;background:#000;"></div>
</div></body></html>
